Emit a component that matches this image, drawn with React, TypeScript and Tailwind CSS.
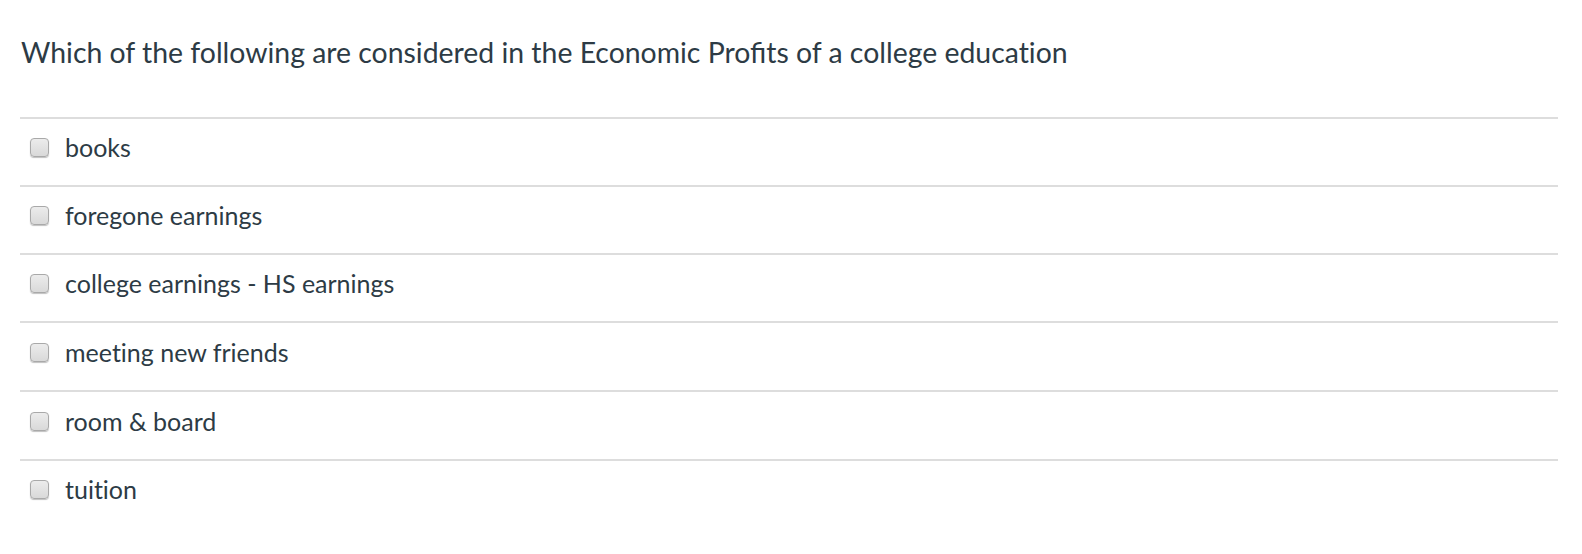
import React from "react";

// U+200C keeps Lato from joining "ti" the way the reference doesn't
const question = "Which of the following are considered in the Economic Profits of a college educat\u200Cion";

const options = [
  "books",
  "foregone earnings",
  "college earnings - HS earnings",
  "meet\u200Cing new friends",
  "room & board",
  "tu\u200Cit\u200Cion",
];

const Box = () => (
  <span className="flex h-[19px] w-[19px] shrink-0 rounded-[4px] border border-[#a9a9a9] bg-gradient-to-b from-[#ececec] to-[#d9d9d9] shadow-[0_1px_1px_rgba(0,0,0,0.25)]" />
);

export default function App() {
  return (
    <div className="min-h-screen bg-white text-[#2d3b45]" style={{ fontFamily: "Lato, 'Noto Sans', sans-serif" }}>
      <div className="pl-[21px] pr-6 pt-[34px]">
        <h1 className="text-[28.4px] leading-[36px] font-normal">{question}</h1>
      </div>
      <div className="ml-5 mr-6 mt-[47px]">
        {options.map((o, i) => (
          <label
            key={o}
            className={`flex items-center gap-[16px] border-t-2 border-[#dddddd] pb-[9px] pl-[10px] ${i === 3 || i === 4 ? "h-[69px]" : "h-[68px]"}`}
          >
            <Box />
            <span className="text-[25px] leading-none">{o}</span>
          </label>
        ))}
      </div>
    </div>
  );
}
